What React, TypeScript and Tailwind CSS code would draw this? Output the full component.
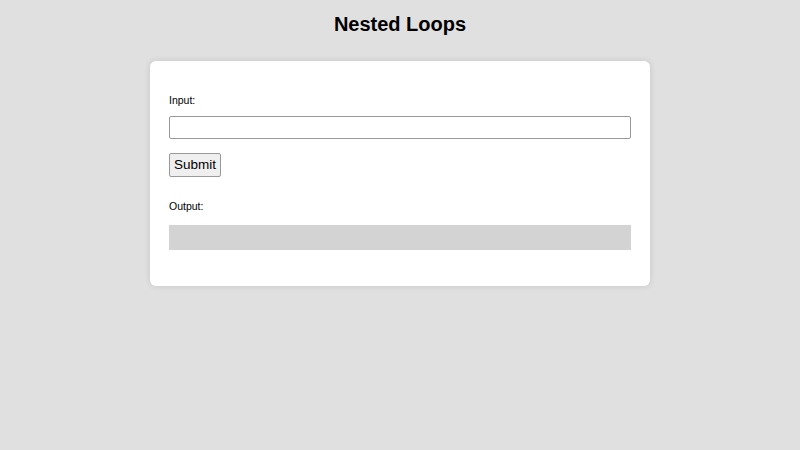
import React from "react";

export default function App() {
  return (
    <div className="min-h-[450px] w-full bg-[#e0e0e0] font-['Liberation_Sans',Arial,sans-serif] text-black">
      <h1 className="pt-[11px] text-center text-[20px] font-bold leading-[26px]">Nested Loops</h1>
      <div className="mx-auto mt-[24px] w-[500px] rounded-[6px] bg-white px-[19px] pb-[36px] pt-[33px] shadow-[0_0_6px_rgba(0,0,0,0.12)]">
        <div className="text-[10.5px] leading-[12px]">Input:</div>
        <input
          type="text"
          className="mt-[10px] block h-[23px] w-full rounded-[2px] border border-[#999999] bg-white px-1 text-[13px] outline-none"
        />
        <button className="mt-[14px] block h-[24px] rounded-[2px] border border-[#999999] bg-[#efefef] px-[4px] text-[13.5px] leading-[16px]">
          Submit
        </button>
        <div className="mt-[23px] text-[10.5px] leading-[12px]">Output:</div>
        <div className="mt-[13px] h-[25px] w-full bg-[#d3d3d3]"></div>
      </div>
    </div>
  );
}
